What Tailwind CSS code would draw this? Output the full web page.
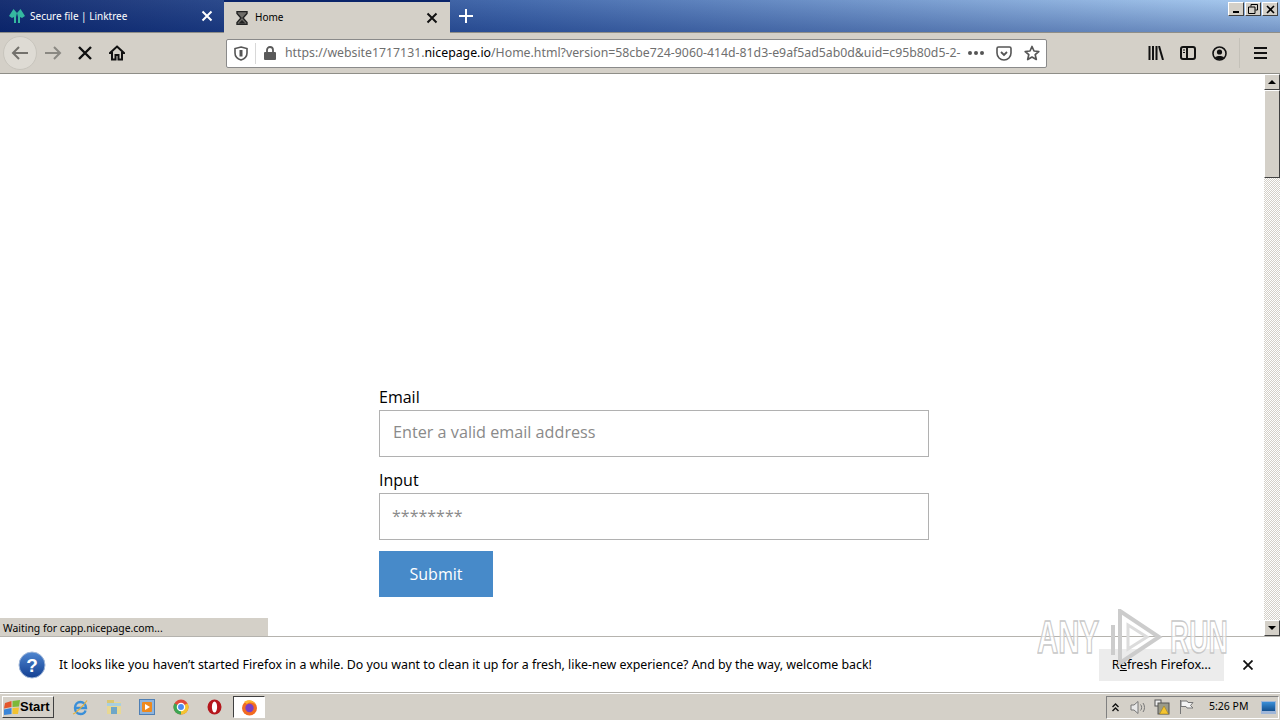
<!DOCTYPE html>
<html lang="en">
<head>
  <meta charset="UTF-8" />
  <title>Home</title>
  <script src="https://cdn.jsdelivr.net/npm/@tailwindcss/browser@4"></script>
</head>
<body class="w-[1280px] h-[720px] overflow-hidden bg-white font-['Liberation_Sans',sans-serif]">
<div class="relative flex flex-col w-[1280px] h-[720px]">

  <!-- tab strip -->
  <div class="flex h-[33px] shrink-0 bg-[linear-gradient(to_bottom,rgba(255,255,255,0.06),rgba(10,36,106,0.32)),linear-gradient(to_right,#0a246a,#3a62a8_40%,#a6caf0)] border-b border-[#8f8e88]">
    <div class="flex items-center w-[224px] pl-[9px] pr-[11px] h-[32px] text-white text-[10px]">
      <svg class="w-[16px] h-[14px] mr-[5px]" viewBox="0 0 16 14"><path d="M8 4 4.500 0 0 7 3 9 5 8V14H7V8ZM8 4 11.500 0 16 7 13 9 11 8V14H9V8Z" fill="#35b8a0"/></svg>
      <span class="font-['Noto_Sans',sans-serif]">Secure file | Linktree</span>
      <svg class="w-[12px] h-[12px] ml-auto" viewBox="0 0 12 12"><path d="M1.500 1.500 10.500 10.500M10.500 1.500 1.500 10.500" stroke="#fff" stroke-width="2"/></svg>
    </div>
    <div class="flex items-center w-[226px] h-[33px] pl-[11px] pr-[12px] bg-[#d4d0c8] border-t-2 border-[#0a246a] text-black text-[10px]">
      <svg class="w-[14px] h-[14px] mr-[6px]" viewBox="0 0 14 14"><path d="M2 .5H12V2.500L8 7 12 11.500V13.500H2V11.500L6 7 2 2.500Z" fill="#6f6d68" stroke="#222" stroke-width="1.400"/><path d="M3.500 12.500 7 9 10.500 12.500Z" fill="#222"/></svg>
      <span class="font-['Noto_Sans',sans-serif]">Home</span>
      <svg class="w-[12px] h-[12px] ml-auto" viewBox="0 0 12 12"><path d="M1.500 1.500 10.500 10.500M10.500 1.500 1.500 10.500" stroke="#111" stroke-width="2"/></svg>
    </div>
    <div class="flex items-center pl-[9px]">
      <svg class="w-[14px] h-[14px]" viewBox="0 0 14 14"><path d="M7 0V14M0 7H14" stroke="#fff" stroke-width="2"/></svg>
    </div>
    <div class="flex ml-auto mr-[2px] mt-[2px] gap-[1px] h-[14px]">
      <div class="flex items-end justify-center pb-[2px] w-[16px] h-[14px] bg-[#d4d0c8] border border-[#fff] border-r-[#404040] border-b-[#404040]"><div class="w-[6px] h-[2px] bg-black"></div></div>
      <div class="flex items-center justify-center w-[16px] h-[14px] bg-[#d4d0c8] border border-[#fff] border-r-[#404040] border-b-[#404040]">
        <svg class="w-[10px] h-[10px]" viewBox="0 0 10 10"><path d="M3 2.500V.5H9.500V6H7.500M.5 3H7V9.500H.5Z" fill="none" stroke="#000"/></svg>
      </div>
      <div class="flex items-center justify-center w-[16px] h-[14px] bg-[#d4d0c8] border border-[#fff] border-r-[#404040] border-b-[#404040]">
        <svg class="w-[9px] h-[9px]" viewBox="0 0 9 9"><path d="M1 1 8 8M8 1 1 8" stroke="#000" stroke-width="1.600"/></svg>
      </div>
    </div>
  </div>

  <!-- toolbar -->
  <div class="flex items-center h-[41px] shrink-0 bg-[#d4d0c8] border-b border-[#8f8e88]">
    <div class="flex items-center justify-center ml-[3px] w-[34px] h-[34px] rounded-full bg-[#dedbd4] border border-[#c8c5bd]">
      <svg class="w-[18px] h-[16px]" viewBox="0 0 18 16"><path d="M17 8H2M8 2 2 8 8 14" fill="none" stroke="#73716c" stroke-width="2"/></svg>
    </div>
    <svg class="w-[18px] h-[16px] ml-[7px]" viewBox="0 0 18 16"><path d="M1 8H16M10 2 16 8 10 14" fill="none" stroke="#8a8882" stroke-width="2"/></svg>
    <svg class="w-[16px] h-[16px] ml-[15px]" viewBox="0 0 16 16"><path d="M2 2 14 14M14 2 2 14" stroke="#111" stroke-width="2.400"/></svg>
    <svg class="w-[16px] h-[16px] ml-[16px]" viewBox="0 0 16 16"><path d="M8 1.500 15 8H13V14.500H9.500V10H6.500V14.500H3V8H1Z" fill="none" stroke="#111" stroke-width="2"/></svg>

    <div class="flex items-center ml-[101px] w-[821px] h-[29px] bg-white border border-[#8a8a8a] rounded-[2px]">
      <svg class="w-[14px] h-[15px] ml-[7px]" viewBox="0 0 14 15"><path d="M7 1 13 2.500V7C13 11 10 13 7 14 4 13 1 11 1 7V2.500Z" fill="none" stroke="#555" stroke-width="1.600"/><path d="M7 4V10.500" stroke="#555" stroke-width="3"/></svg>
      <div class="w-px h-[21px] bg-[#d8d8d8] ml-[7px]"></div>
      <svg class="w-[12px] h-[14px] ml-[8px]" viewBox="0 0 12 14"><path d="M3 6V4A3 3 0 0 1 9 4V6" fill="none" stroke="#5a5a5a" stroke-width="1.800"/><rect y="6" width="12" height="8" rx="1" fill="#5a5a5a"/></svg>
      <div class="ml-[9px] w-[675px] whitespace-nowrap text-[12.3px] text-[#6f6f6f] font-['Noto_Sans',sans-serif]">https://website1717131.<span class="text-black">nicepage.io</span>/Home.html?version=58cbe724-9060-414d-81d3-e9af5ad5ab0d&amp;uid=c95b80d5-2-</div>
      <div class="flex gap-[2px] ml-[8px]">
        <div class="w-[4px] h-[4px] rounded-full bg-[#555]"></div>
        <div class="w-[4px] h-[4px] rounded-full bg-[#555]"></div>
        <div class="w-[4px] h-[4px] rounded-full bg-[#555]"></div>
      </div>
      <svg class="w-[16px] h-[15px] ml-[12px]" viewBox="0 0 16 15"><path d="M1 2.500C1 1.500 1.500 1 2.500 1H13.500C14.500 1 15 1.500 15 2.500V7A7 7 0 0 1 1 7Z" fill="none" stroke="#555" stroke-width="1.600"/><path d="M5 6 8 9 11 6" fill="none" stroke="#555" stroke-width="1.800"/></svg>
      <svg class="w-[16px] h-[16px] ml-[12px]" viewBox="0 0 16 16"><path d="M8 1.500 10 6 14.800 6.500 11.200 9.600 12.300 14.500 8 12 3.700 14.500 4.800 9.600 1.200 6.500 6 6Z" fill="none" stroke="#555" stroke-width="1.700" stroke-linejoin="round"/></svg>
    </div>

    <svg class="w-[16px] h-[14px] ml-[101px]" viewBox="0 0 16 14"><path d="M1.500 0V14M5 0V14M8.500 0V14" stroke="#111" stroke-width="2"/><path d="M11 0 15 14" stroke="#111" stroke-width="2"/></svg>
    <svg class="w-[16px] h-[14px] ml-[16px]" viewBox="0 0 16 14"><rect x="1" y="1" width="14" height="12" rx="2" fill="none" stroke="#111" stroke-width="2"/><path d="M7 1V13" stroke="#111" stroke-width="2"/><path d="M3 4H5M3 6.500H5" stroke="#111"/></svg>
    <svg class="w-[15px] h-[15px] ml-[16px]" viewBox="0 0 15 15"><circle cx="7.500" cy="7.500" r="6.500" fill="none" stroke="#111" stroke-width="1.600"/><circle cx="7.500" cy="6" r="2.600" fill="#111"/><path d="M3 11.500C4 9.500 11 9.500 12 11.500L9.500 13.500H5.500Z" fill="#111"/></svg>
    <div class="w-px h-[30px] bg-[#c4c1b9] ml-[12px]"></div>
    <svg class="w-[13px] h-[12px] ml-[14px]" viewBox="0 0 13 12"><path d="M0 1H13M0 6H13M0 11H13" stroke="#111" stroke-width="2"/></svg>
  </div>

  <!-- page + scrollbar -->
  <div class="flex flex-1 min-h-0">
    <div class="flex-1 pl-[379px] pt-[313px] font-['Open_Sans',sans-serif]">
      <div class="text-[16px] leading-[20px] text-black">Email</div>
      <div class="flex items-center w-[550px] h-[47px] mt-[3px] pl-[13px] pb-[2px] border border-[#b1b1b1] text-[16.2px] text-[#8a8a8a]">Enter a valid email address</div>
      <div class="text-[16px] leading-[20px] text-black mt-[13px]">Input</div>
      <div class="flex items-center w-[550px] h-[47px] mt-[3px] pl-[12px] pb-[2px] border border-[#b1b1b1] text-[16px] text-[#8a8a8a]">********</div>
      <div class="flex items-center justify-center w-[114px] h-[46px] mt-[11px] bg-[#478ac9] text-white text-[16px]">Submit</div>
    </div>
    <div class="flex flex-col w-[16px] bg-[#eeece8] bg-[repeating-conic-gradient(#d4d0c8_0%_25%,#fff_0%_50%)] bg-[length:2px_2px]">
      <div class="flex items-center justify-center h-[16px] bg-[#d4d0c8] border border-[#fff] border-r-[#404040] border-b-[#404040]">
        <div class="w-0 h-0 border-x-[4px] border-x-transparent border-b-[4px] border-b-black"></div>
      </div>
      <div class="h-[88px] bg-[#d4d0c8] border border-[#fff] border-r-[#404040] border-b-[#404040]"></div>
      <div class="flex items-center justify-center h-[16px] mt-auto bg-[#d4d0c8] border border-[#fff] border-r-[#404040] border-b-[#404040]">
        <div class="w-0 h-0 border-x-[4px] border-x-transparent border-t-[4px] border-t-black"></div>
      </div>
    </div>
  </div>

  <!-- notification bar -->
  <div class="flex items-center h-[57px] shrink-0 pt-[1px] bg-white border-t border-[#b5b3ae] border-b border-b-[#b5b3ae]">
    <svg class="w-[28px] h-[28px] ml-[18px]" viewBox="0 0 28 28">
      <defs><linearGradient id="q" x1="0" y1="0" x2="0" y2="1"><stop offset="0" stop-color="#4f86d0"/><stop offset="1" stop-color="#123f92"/></linearGradient></defs>
      <circle cx="14" cy="14" r="13" fill="url(#q)" stroke="#9fb6d8"/>
      <text x="14" y="20.500" text-anchor="middle" font-size="19" font-weight="700" fill="#fff" font-family="Liberation Sans">?</text>
    </svg>
    <div class="ml-[13px] text-[12.38px] text-black font-['Noto_Sans',sans-serif] whitespace-nowrap">It looks like you haven’t started Firefox in a while. Do you want to clean it up for a fresh, like-new experience? And by the way, welcome back!</div>
    <div class="flex items-center justify-center ml-auto w-[125px] h-[32px] bg-[#ececec] text-[12.7px] text-black font-['Noto_Sans',sans-serif]"><span>R<span class="underline">e</span>fresh Firefox…</span></div>
    <svg class="w-[10px] h-[10px] ml-[19px] mr-[27px]" viewBox="0 0 10 10"><path d="M.5.5 9.500 9.500M9.500.5 .5 9.500" stroke="#111" stroke-width="1.800"/></svg>
  </div>

  <!-- taskbar -->
  <div class="flex items-center h-[27px] shrink-0 bg-[#d4d0c8] border-t border-white">
    <div class="flex items-center ml-[2px] w-[52px] h-[22px] pl-[1px] bg-[#d4d0c8] border border-white border-r-[#404040] border-b-[#404040] text-[13px] font-bold text-black">
      <svg class="w-[16px] h-[15px] shrink-0" viewBox="0 0 16 15"><path d="M1 3 7.500 1V7L0 8.500Z" fill="#e4562b"/><path d="M8.500 1 16 0 15 6.500 8.500 7Z" fill="#7cb83a"/><path d="M0 9.500 7.500 8V14L0 15Z" fill="#3b86d8"/><path d="M8.500 8 15 7.500 14 14 8.500 14Z" fill="#f2c230"/></svg>
      Start
    </div>
    <svg class="w-[17px] h-[17px] ml-[18px]" viewBox="0 0 17 17"><path d="M3 9H14C14 5 11 3 8.500 3 5.500 3 3 5.500 3 9 3 12.500 5.500 15 8.500 15 11 15 13 13.500 13.500 11.500" fill="none" stroke="#3a8fd8" stroke-width="2.400"/><path d="M1 15C4 14 12 6 15 1.500" fill="none" stroke="#e2b13c" stroke-width="1.200"/></svg>
    <svg class="w-[16px] h-[16px] ml-[17px]" viewBox="0 0 16 16"><rect x="1" y="3" width="14" height="12" fill="#e8d894"/><rect x="1" y="1" width="7" height="3" fill="#d9c672"/><rect x="5" y="8" width="6" height="7" fill="#6ea6c8"/><rect x="1" y="4" width="14" height="3" fill="#a8cfe0"/></svg>
    <svg class="w-[16px] h-[16px] ml-[17px]" viewBox="0 0 16 16"><rect x=".5" y=".5" width="15" height="15" fill="#8fb4dc" stroke="#4f7fb4"/><rect x="3" y="3" width="10" height="10" rx="1" fill="#ee8a1e"/><path d="M6 5 11 8 6 11Z" fill="#fff"/></svg>
    <svg class="w-[16px] h-[16px] ml-[18px]" viewBox="0 0 16 16"><circle cx="8" cy="8" r="7.500" fill="#e0493a"/><path d="M8 8 14.500 4.200A7.500 7.500 0 0 1 8 15.500Z" fill="#f4c430"/><path d="M8 8 8 15.500A7.500 7.500 0 0 1 1.500 4.200Z" fill="#3da653"/><circle cx="8" cy="8" r="3.600" fill="#4c8bf0" stroke="#fff" stroke-width="1.300"/></svg>
    <svg class="w-[15px] h-[16px] ml-[18px]" viewBox="0 0 15 16"><ellipse cx="7.500" cy="8" rx="7" ry="7.500" fill="#b5161c"/><ellipse cx="7.500" cy="8" rx="2.600" ry="5.600" fill="#fff"/></svg>
    <div class="flex items-center justify-center w-[32px] h-[22px] ml-[11px] bg-white border border-[#404040] border-r-white border-b-white">
      <svg class="w-[17px] h-[17px]" viewBox="0 0 17 17"><circle cx="8.500" cy="9" r="7.500" fill="#f26b21"/><circle cx="8.500" cy="9" r="4.200" fill="#7b3fc4"/><path d="M3 3C7 0 13 1 15 6 12 3 8 3 6 5Z" fill="#ffb52e"/></svg>
    </div>
    <div class="flex items-center ml-auto mr-[1px] w-[173px] h-[23px] border border-[#808080] border-r-white border-b-white">
      <svg class="w-[7px] h-[9px] ml-[5px]" viewBox="0 0 7 9"><path d="M.5 4 3.500 1 6.500 4M.5 8 3.500 5 6.500 8" fill="none" stroke="#111" stroke-width="1.400"/></svg>
      <svg class="w-[16px] h-[15px] ml-[11px]" viewBox="0 0 16 15"><path d="M1 5H4L8 1.500V13.500L4 10H1Z" fill="#e8e8e8" stroke="#777"/><path d="M10.500 4.500C12 6 12 9 10.500 10.500M13 3C15 5.500 15 9.500 13 12" fill="none" stroke="#777"/></svg>
      <svg class="w-[16px] h-[16px] ml-[8px]" viewBox="0 0 16 16"><rect x="1" y="1" width="6" height="6" fill="#eee" stroke="#555"/><rect x="4" y="4" width="11" height="11" fill="#9a9a8a" stroke="#555"/><path d="M10 7 14.500 15H5.500Z" fill="#f4c430" stroke="#9b7a10" stroke-width=".5"/></svg>
      <svg class="w-[15px] h-[16px] ml-[9px]" viewBox="0 0 15 16"><path d="M1.500 1V15" stroke="#777"/><path d="M2 2H8L9 3.500H14L11.500 6.500 14 9H8L7 7.500H2Z" fill="#f4f4f4" stroke="#777"/></svg>
      <span class="ml-[15px] text-[10.5px] text-black font-['Noto_Sans',sans-serif]">5:26 PM</span>
      <div class="ml-auto mr-[2px] w-[15px] h-[13px] bg-gradient-to-b from-[#3b8fd8] to-[#13508f] border border-[#9fb6d8] border-b-[3px]"></div>
    </div>
  </div>

  <!-- status tooltip over page -->
  <div class="absolute left-0 top-[618px] w-[268px] h-[18px] pl-[3px] bg-[#d4d0c8] text-[10.4px] leading-[20px] text-black font-['Noto_Sans',sans-serif]">Waiting for capp.nicepage.com...</div>

  <!-- watermark -->
  <div class="absolute left-[1037px] top-[606px] flex items-center h-[58px] pt-[4px] text-white/60 font-bold [-webkit-text-stroke:1.5px_#c8c8c8] text-[46px] leading-none">
    <span class="scale-x-[0.64] origin-left w-[68px]">ANY</span>
    <svg class="w-[52px] h-[56px] ml-[6px]" viewBox="0 0 52 56"><path d="M2 16V46M9 2V54L48 28Z" fill="none" stroke="#cccccc" stroke-width="4"/><path d="M17 16V40L36 28Z" fill="none" stroke="#dcdcdc" stroke-width="3"/></svg>
    <span class="scale-x-[0.58] origin-left ml-[7px]">RUN</span>
  </div>
</div>
</body>
</html>
